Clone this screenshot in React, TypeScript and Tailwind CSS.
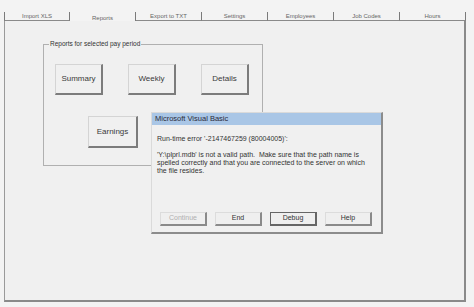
const tabs = ["Import XLS", "Reports", "Export to TXT", "Settings", "Employees", "Job Codes", "Hours"];

function ReportButton({ label }: { label: string }) {
  return (
    <button className="flex h-[31px] w-[48px] items-center justify-center border-t border-l border-t-[#d4d4d4] border-l-[#d4d4d4] border-r-2 border-b-2 border-r-[#7c7c7c] border-b-[#7c7c7c] bg-[#f0f0f0] text-[8px] text-[#3a3a3a]">
      {label}
    </button>
  );
}

function DialogButton({ label, disabled, isDefault }: { label: string; disabled?: boolean; isDefault?: boolean }) {
  return (
    <button
      className={
        isDefault
          ? "flex h-[14px] w-[47px] items-center justify-center border border-[#666] border-r-2 border-b-2 bg-[#efefef] text-[7px] text-[#333]"
          : "flex h-[14px] w-[47px] items-center justify-center border-t border-l border-t-[#dcdcdc] border-l-[#dcdcdc] border-r-2 border-b-2 border-r-[#8a8a8a] border-b-[#8a8a8a] bg-[#efefef] text-[7px] " +
            (disabled ? "text-[#b0b0b0]" : "text-[#333]")
      }
    >
      {label}
    </button>
  );
}

export default function App() {
  return (
    <div
      className="relative h-[307px] w-[474px] overflow-hidden bg-[#f3f3f3] pt-[12px]"
      style={{ fontFamily: '"Liberation Sans", Arial, sans-serif' }}
    >
      {/* tab strip */}
      <div className="ml-[4px] flex w-[462px]">
        {tabs.map((t, i) => (
          <div
            key={t}
            className={
              "flex h-[9px] w-[66px] items-center justify-center border-r border-r-[#7a7a7a] text-[6px] leading-none text-[#666] " +
              (i === 0 ? "border-l border-l-[#7a7a7a] " : "") +
              (t === "Reports" ? "pt-[2px]" : "border-b border-b-[#8a8a8a]")
            }
          >
            {t}
          </div>
        ))}
      </div>

      {/* main panel */}
      <div className="ml-[4px] h-[281px] w-[462px] border-l border-r-2 border-b-2 border-l-[#9a9a9a] border-r-[#8a8a8a] border-b-[#8a8a8a] bg-[#f0f0f0] pt-[23px]">
        <div className="relative ml-[38px] h-[122px] w-[220px] border border-[#b0b0b0] pt-[19px] pl-[11px]">
          <span className="absolute -top-[5px] left-[5px] bg-[#f0f0f0] px-[1px] text-[6.5px] leading-[8px] text-[#333]">
            Reports for selected pay period
          </span>
          <div className="flex gap-[25px]">
            <ReportButton label="Summary" />
            <ReportButton label="Weekly" />
            <ReportButton label="Details" />
          </div>
          <div className="mt-[21px] ml-[33px] flex">
            <div className="flex h-[32px] w-[50px] items-center justify-center border-t border-l border-t-[#d4d4d4] border-l-[#d4d4d4] border-r-2 border-b-2 border-r-[#7c7c7c] border-b-[#7c7c7c] bg-[#f0f0f0] text-[8px] text-[#3a3a3a]">
              Earnings
            </div>
          </div>
        </div>
      </div>

      {/* error dialog */}
      <div className="absolute top-[112px] left-[151px] flex h-[122px] w-[232px] flex-col border-t border-l border-t-[#dadada] border-l-[#dadada] border-r-2 border-b-2 border-r-[#8c8c8c] border-b-[#8c8c8c] bg-[#f0f0f0]">
        <div className="flex h-[12px] items-center bg-[#a9c6e6] pl-[3px] text-[7.5px] text-[#2a2a3a]">
          Microsoft Visual Basic
        </div>
        <div className="mt-[10px] pl-[5px] text-[7px] leading-[8px] text-[#333]">
          Run-time error '-2147467259 (80004005)':
        </div>
        <div className="mt-[8px] pl-[5px] pr-[12px] text-[7px] leading-[8px] text-[#333]">
          'Y:\plprl.mdb' is not a valid path.&nbsp; Make sure that the path name is spelled correctly and that you are
          connected to the server on which the file resides.
        </div>
        <div className="mt-auto mb-[6px] flex gap-[8px] pl-[8px]">
          <DialogButton label="Continue" disabled />
          <DialogButton label="End" />
          <DialogButton label="Debug" isDefault />
          <DialogButton label="Help" />
        </div>
      </div>
    </div>
  );
}
